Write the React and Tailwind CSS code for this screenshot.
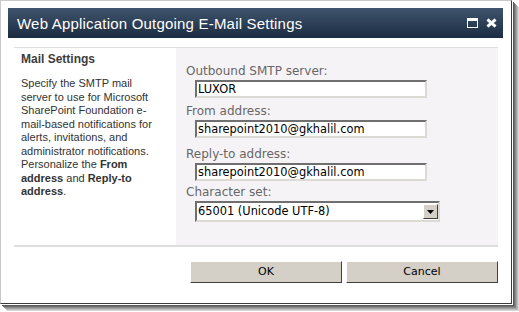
import React from "react";

const labelFont = { fontFamily: '"DejaVu Sans", Verdana, sans-serif' };

function Field({ label, value, top }) {
    return (
        <div className={top}>
            <div className="h-[14px] leading-[14px] text-[12px] text-[#676767]" style={labelFont}>
                {label}
            </div>
            <div
                className="mt-[2px] ml-[9px] w-[232px] h-[18px] bg-white border-2 border-t-[#6f6f6f] border-l-[#6f6f6f] border-r-[#dcdad4] border-b-[#dcdad4] pl-[1px] leading-[14px] text-[11.4px] text-black"
                style={labelFont}
            >
                {value}
            </div>
        </div>
    );
}

export default function App() {
    return (
        <div className="w-[519px] h-[312px] bg-white overflow-hidden">
            <div className="w-[512px] h-[304px] bg-white border border-t-[#c9c9c9] border-l-[#c9c9c9] border-r-[#3c3c3c] border-b-[#3c3c3c] shadow-[1px_1px_0_#ffffff,2px_2px_0_#5a5a5a,3px_3px_0_#6e6e6e,4px_4px_0_#8a8a8a,5px_5px_0_#a4a4a4,6px_6px_0_#bdbdbd,7px_7px_0_#d6d6d6]">
                {/* title bar */}
                <div className="ml-[7px] mt-[7px] w-[495px] h-[30px] bg-gradient-to-b from-[#3f546d] to-[#1c2d42] flex items-center pl-[9px] pr-[6px]">
                    <div
                        className="text-white text-[15px] leading-none tracking-[0.2px]"
                        style={{ fontFamily: '"Liberation Sans", Arial, sans-serif' }}
                    >
                        Web Application Outgoing E-Mail Settings
                    </div>
                    <div className="ml-auto flex items-center gap-[8px]">
                        <svg width="11" height="10" viewBox="0 0 11 10">
                            <rect x="0.5" y="0.5" width="10" height="9" fill="none" stroke="#ffffff" />
                            <rect x="0" y="0" width="11" height="3" fill="#ffffff" />
                        </svg>
                        <svg width="11" height="10" viewBox="0 0 11 10">
                            <path d="M1.5 1.5 L9.5 8.5 M9.5 1.5 L1.5 8.5" stroke="#8a94a0" strokeWidth="3.6" />
                            <path d="M1.5 1.5 L9.5 8.5 M9.5 1.5 L1.5 8.5" stroke="#ffffff" strokeWidth="2.4" />
                        </svg>
                    </div>
                </div>

                {/* body */}
                <div className="ml-[13px] mt-[9px] w-[484px] border-t border-[#dedede] flex">
                    <div
                        className="w-[162px] pl-[7px] pt-[4px] text-[11px] leading-[13.5px] text-[#333333]"
                        style={{ fontFamily: '"Liberation Sans", Tahoma, sans-serif' }}
                    >
                        <div className="font-bold text-[12px] leading-[14px] text-[#3d3d3d]">Mail Settings</div>
                        <div className="mt-[11px]">
                            Specify the SMTP mail<br />
                            server to use for Microsoft<br />
                            SharePoint Foundation e-<br />
                            mail-based notifications for<br />
                            alerts, invitations, and<br />
                            administrator notifications.<br />
                            Personalize the <b>From</b><br />
                            <b>address</b> and <b>Reply-to</b><br />
                            <b>address</b>.
                        </div>
                    </div>
                    <div className="w-[322px] h-[197px] bg-[#f6f3f6] pl-[10px] pt-[16px]">
                        <Field label="Outbound SMTP server:" value="LUXOR" />
                        <Field top="mt-[6px]" label="From address:" value="sharepoint2010@gkhalil.com" />
                        <Field top="mt-[9px]" label="Reply-to address:" value="sharepoint2010@gkhalil.com" />
                        <div className="mt-[4px]">
                            <div className="h-[14px] leading-[14px] text-[12px] text-[#676767]" style={labelFont}>
                                Character set:
                            </div>
                            <div
                                className="mt-[2px] ml-[9px] w-[245px] h-[21px] bg-white border-2 border-t-[#6f6f6f] border-l-[#6f6f6f] border-r-[#dcdad4] border-b-[#dcdad4] flex items-center pl-[1px] text-[11.4px] text-black"
                                style={labelFont}
                            >
                                <span>65001 (Unicode UTF-8)</span>
                                <div className="ml-auto w-[15px] h-[15px] bg-[#d4d0c8] border border-t-white border-l-white border-r-[#404040] border-b-[#404040] flex items-center justify-center">
                                    <svg width="7" height="4" viewBox="0 0 7 4">
                                        <path d="M0 0 H7 L3.5 4 Z" fill="#000000" />
                                    </svg>
                                </div>
                            </div>
                        </div>
                    </div>
                </div>
                <div className="ml-[13px] w-[484px] h-[2px] bg-[#dedede]" />

                {/* buttons */}
                <div
                    className="ml-[13px] w-[484px] mt-[14px] flex justify-end gap-[4px] text-[11px] text-black"
                    style={labelFont}
                >
                    <button className="w-[152px] h-[22px] bg-[#d4d0c8] border border-t-white border-l-white border-r-[#404040] border-b-[#404040]">
                        OK
                    </button>
                    <button className="w-[152px] h-[22px] bg-[#d4d0c8] border border-t-white border-l-white border-r-[#404040] border-b-[#404040]">
                        Cancel
                    </button>
                </div>
            </div>
        </div>
    );
}
